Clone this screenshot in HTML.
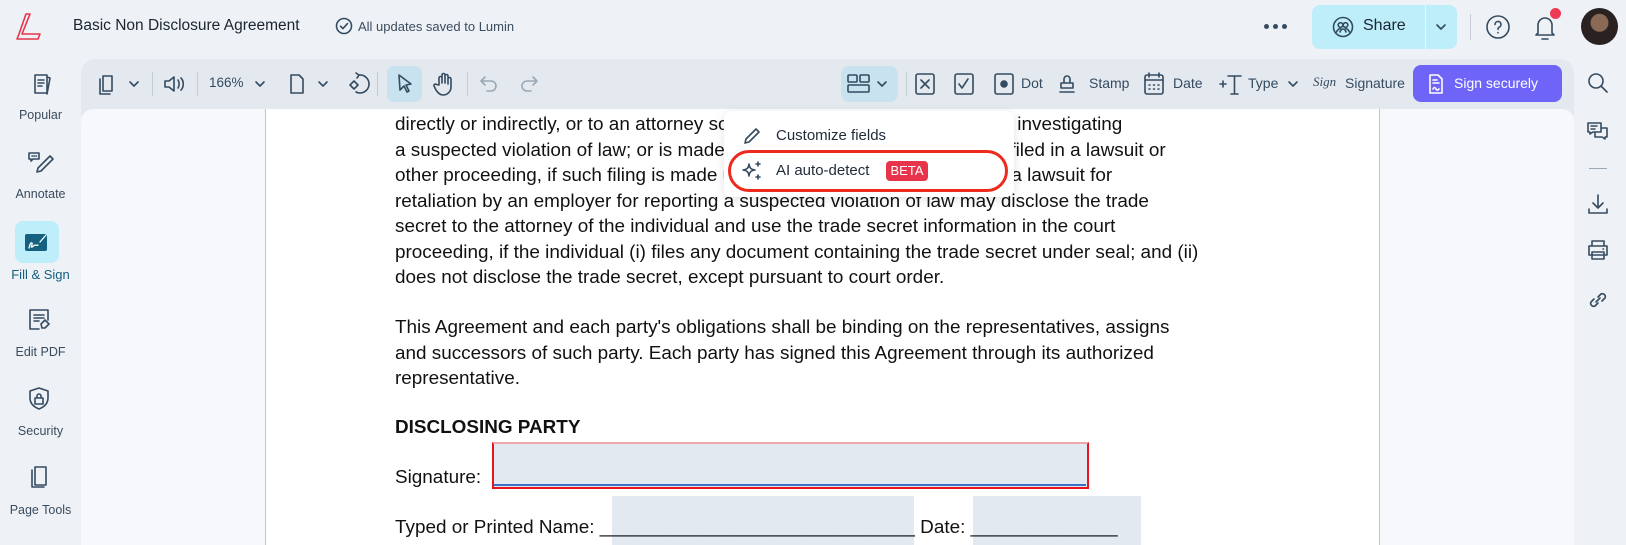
<!DOCTYPE html>
<html><head><meta charset="utf-8"><style>
*{margin:0;padding:0;box-sizing:border-box}
body{width:1626px;height:545px;overflow:hidden;background:#eef1f6;font-family:"Liberation Sans",sans-serif;position:relative;color:#1e2b38}
.a{position:absolute}
svg{position:absolute;fill:none;stroke:#344b60;stroke-width:1.6;stroke-linecap:round;stroke-linejoin:round}
.lbl{position:absolute;width:81px;text-align:center;font-size:12.5px;color:#3a4c5e}
.tb{position:absolute;top:70px;font-size:14px;color:#344b60}
.sep{position:absolute;top:72px;width:1px;height:24px;background:#c4ccd6}
.ln{position:absolute;left:395px;font-size:18.9px;white-space:nowrap;color:#111;font-family:"Liberation Sans",Arial,sans-serif}
</style></head><body>
<!-- header -->
<svg style="left:14px;top:12px" width="30" height="30" viewBox="0 0 30 30"><path d="M12 2 L16 2 L8 22 L26 22 L24 27 L3 27 L5 22 Z" stroke="#e8344a" stroke-width="1.6"/></svg>
<div class="a" style="left:73px;top:17px;font-size:15.5px;color:#1a2530">Basic Non Disclosure Agreement</div>
<svg style="left:335px;top:17px" width="18" height="18" viewBox="0 0 18 18"><circle cx="9" cy="9" r="7.5"/><path d="M5.5 9.2l2.4 2.4 4.6-5"/></svg>
<div class="a" style="left:358px;top:19px;font-size:13px;color:#3a4c5e">All updates saved to Lumin</div>
<div class="a" style="left:1264px;top:24px;width:5px;height:5px;border-radius:50%;background:#344b60;box-shadow:9px 0 0 #344b60,18px 0 0 #344b60"></div>
<div class="a" style="left:1312px;top:5px;width:145px;height:44px;background:#bdeefa;border-radius:8px"></div>
<div class="a" style="left:1425px;top:5px;width:1px;height:44px;background:#e6f8fd"></div>
<svg style="left:1332px;top:16px" width="22" height="22" viewBox="0 0 22 22"><circle cx="11" cy="11" r="9.5"/><circle cx="8.5" cy="9" r="2.3"/><circle cx="13.5" cy="9" r="2.3"/><path d="M4.5 16c1-2.5 3-3.5 4-3.5M17.5 16c-1-2.5-3-3.5-4-3.5M8 16c.5-2 2-3 3-3s2.5 1 3 3"/></svg>
<div class="a" style="left:1363px;top:17px;font-size:16px;color:#1a2530">Share</div>
<svg style="left:1434px;top:20px" width="14" height="14" viewBox="0 0 14 14"><path d="M3 5l4 4 4-4"/></svg>
<div class="a" style="left:1470px;top:14px;width:1px;height:26px;background:#c4ccd6"></div>
<svg style="left:1485px;top:14px" width="26" height="26" viewBox="0 0 26 26"><circle cx="13" cy="13" r="11"/><path d="M10 10.5a3 3 0 1 1 4 2.8c-.8.4-1 1-1 2M13 18.5v.3"/></svg>
<svg style="left:1532px;top:12px" width="26" height="30" viewBox="0 0 26 30"><path d="M6 21V13a7 7 0 0 1 14 0v8l2 2H4zM10 27h6"/></svg>
<div class="a" style="left:1550px;top:8px;width:11px;height:11px;border-radius:50%;background:#ef3a55"></div>
<div class="a" style="left:1581px;top:8px;width:37px;height:37px;border-radius:50%;background:radial-gradient(circle at 50% 40%,#8a6a55 0 30%,#2a2220 32% 100%)"></div>
<!-- toolbar -->
<div class="a" style="left:81px;top:59px;width:1493px;height:486px;background:#e4e9f0;border-radius:14px 14px 0 0"></div>
<svg style="left:96px;top:72px" width="22" height="24" viewBox="0 0 22 24"><path d="M7 4h9v15H7zM4 7v15h10"/></svg>
<svg style="left:128px;top:78px" width="12" height="12" viewBox="0 0 12 12"><path d="M2 4l4 4 4-4"/></svg>
<div class="sep" style="left:152px"></div>
<svg style="left:162px;top:73px" width="24" height="22" viewBox="0 0 24 22"><path d="M3 8h4l5-4v14l-5-4H3zM16 7c1.5 2 1.5 6 0 8M19 5c3 3 3 9 0 12"/></svg>
<div class="sep" style="left:197px"></div>
<div class="tb" style="left:209px;top:75px;font-size:13.5px">166%</div>
<svg style="left:254px;top:78px" width="12" height="12" viewBox="0 0 12 12"><path d="M2 4l4 4 4-4"/></svg>
<svg style="left:288px;top:72px" width="18" height="24" viewBox="0 0 18 24"><path d="M3 3h8l4 4v14H3z"/></svg>
<svg style="left:317px;top:78px" width="12" height="12" viewBox="0 0 12 12"><path d="M2 4l4 4 4-4"/></svg>
<svg style="left:347px;top:71px" width="24" height="26" viewBox="0 0 24 26"><path d="M12 4a9 9 0 1 1-3 17M12 4l-3-2M12 4l-2 3M3 14l4-4 4 4-4 4z"/></svg>
<div class="sep" style="left:377px"></div>
<div class="a" style="left:387px;top:66px;width:35px;height:36px;background:#c9e2f0;border-radius:7px"></div>
<svg style="left:395px;top:73px" width="20" height="22" viewBox="0 0 20 22"><path d="M4 2l12 9-5 1 3 6-2 1-3-6-4 4z"/></svg>
<svg style="left:432px;top:71px" width="24" height="26" viewBox="0 0 24 26"><path d="M7 14V7a1.5 1.5 0 0 1 3 0v5V4a1.5 1.5 0 0 1 3 0v8V5a1.5 1.5 0 0 1 3 0v8V8a1.5 1.5 0 0 1 3 0v8a8 8 0 0 1-8 8c-3 0-5-2-7-5l-2-4a1.5 1.5 0 0 1 2.5-1.5z"/></svg>
<div class="sep" style="left:467px"></div>
<svg style="left:478px;top:73px" width="22" height="22" viewBox="0 0 22 22"><path d="M7 4L3 8l4 4M3 8h10a5 5 0 0 1 0 10h-4" stroke="#9aa8b6"/></svg>
<svg style="left:518px;top:73px" width="22" height="22" viewBox="0 0 22 22"><path d="M15 4l4 4-4 4M19 8H9a5 5 0 0 0 0 10h4" stroke="#9aa8b6"/></svg>
<!-- right toolbar -->
<div class="a" style="left:841px;top:66px;width:57px;height:36px;background:#c9e2f0;border-radius:8px"></div>
<svg style="left:846px;top:72px" width="26" height="24" viewBox="0 0 26 24"><rect x="2" y="3" width="9" height="7" rx="1"/><rect x="14" y="3" width="9" height="7" rx="1"/><rect x="2" y="13" width="21" height="7" rx="1"/></svg>
<svg style="left:876px;top:78px" width="12" height="12" viewBox="0 0 12 12"><path d="M2 4l4 4 4-4"/></svg>
<div class="sep" style="left:906px"></div>
<svg style="left:914px;top:72px" width="22" height="24" viewBox="0 0 22 24"><rect x="2" y="2" width="18" height="20" rx="2"/><path d="M7 8l8 8M15 8l-8 8"/></svg>
<svg style="left:953px;top:72px" width="22" height="24" viewBox="0 0 22 24"><rect x="2" y="2" width="18" height="20" rx="2"/><path d="M6 12l3 4 6-9"/></svg>
<svg style="left:993px;top:72px" width="22" height="24" viewBox="0 0 22 24"><rect x="2" y="2" width="18" height="20" rx="2"/><circle cx="11" cy="12" r="3" fill="#344b60"/></svg>
<div class="tb" style="left:1021px;top:75px">Dot</div>
<svg style="left:1056px;top:71px" width="22" height="26" viewBox="0 0 22 26"><path d="M8 12V8a3 3 0 1 1 6 0v4M5 12h12v5H5zM4 21h14"/></svg>
<div class="tb" style="left:1089px;top:75px">Stamp</div>
<svg style="left:1143px;top:71px" width="22" height="26" viewBox="0 0 22 26"><rect x="2" y="4" width="18" height="19" rx="2"/><path d="M2 9h18M6 2v4M16 2v4M6 14h1M10.5 14h1M15 14h1M6 18h1M10.5 18h1M15 18h1"/></svg>
<div class="tb" style="left:1173px;top:75px">Date</div>
<svg style="left:1218px;top:71px" width="26" height="26" viewBox="0 0 26 26"><path d="M10 5h13M16.5 5v18M13 23h7M2 13h6M5 10v6"/></svg>
<div class="tb" style="left:1248px;top:75px">Type</div>
<svg style="left:1287px;top:78px" width="12" height="12" viewBox="0 0 12 12"><path d="M2 4l4 4 4-4"/></svg>
<div class="a" style="left:1313px;top:74px;font-size:13px;font-style:italic;font-family:'Liberation Serif',serif;color:#344b60">Sign</div>
<div class="tb" style="left:1345px;top:75px">Signature</div>
<div class="a" style="left:1413px;top:65px;width:149px;height:37px;background:#6e64f8;border-radius:8px"></div>
<svg style="left:1427px;top:73px" width="18" height="22" viewBox="0 0 18 22"><path d="M3 2h8l4 4v14H3zM6 7h4M6 10h6M6 16c1-2 2-2 3 0s2 1 3 0" stroke="#fff"/></svg>
<div class="a" style="left:1454px;top:75px;font-size:14px;color:#fff">Sign securely</div>
<!-- doc area -->
<div class="a" style="left:81px;top:109px;width:1493px;height:436px;background:#f6f8fc;border-radius:12px 12px 0 0"></div>
<div class="a" style="left:265px;top:109px;width:1115px;height:436px;background:#fff;border-left:1px solid #b4c8da;border-right:1px solid #b4c8da"></div>
<!-- text -->
<div class="ln" style="top:114px">directly or indirectly, or to an attorney solely for the purpose of reporting or investigating</div>
<div class="ln" style="top:140px">a suspected violation of law; or is made in a complaint or other document filed in a lawsuit or</div>
<div class="ln" style="top:165px">other proceeding, if such filing is made under seal. An individual who files a lawsuit for</div>
<div class="ln" style="top:191px">retaliation by an employer for reporting a suspected violation of law may disclose the trade</div>
<div class="ln" style="top:216px">secret to the attorney of the individual and use the trade secret information in the court</div>
<div class="ln" style="top:242px">proceeding, if the individual (i) files any document containing the trade secret under seal; and (ii)</div>
<div class="ln" style="top:267px">does not disclose the trade secret, except pursuant to court order.</div>
<div class="ln" style="top:317px">This Agreement and each party's obligations shall be binding on the representatives, assigns</div>
<div class="ln" style="top:343px">and successors of such party. Each party has signed this Agreement through its authorized</div>
<div class="ln" style="top:368px">representative.</div>
<div class="ln" style="top:417px;font-weight:bold">DISCLOSING PARTY</div>
<div class="a" style="left:492px;top:442px;width:597px;height:47px;background:#e2e9f1;border:2px solid #e8141e;border-top-color:#f0a8b0"></div>
<div class="a" style="left:494px;top:484px;width:592px;height:2px;background:#3a6fc8"></div>
<div class="ln" style="top:467px">Signature:</div>
<div class="a" style="left:612px;top:496px;width:302px;height:49px;background:#e2e9f1"></div>
<div class="a" style="left:973px;top:496px;width:168px;height:49px;background:#e2e9f1"></div>
<div class="ln" style="top:517px">Typed or Printed Name: ______________________________ Date: ______________</div>
<!-- dropdown -->
<div class="a" style="left:724px;top:111px;width:290px;height:86px;background:#fff;border-radius:8px;box-shadow:0 2px 10px rgba(0,0,0,.12)"></div>
<svg style="left:741px;top:125px" width="22" height="22" viewBox="0 0 22 22"><path d="M4 18l1-4L15 4l3 3L8 17z"/></svg>
<div class="a" style="left:776px;top:127px;font-size:15px;color:#1e2b38">Customize fields</div>
<div class="a" style="left:728px;top:150px;width:280px;height:42px;border:3px solid #ee2a1e;border-radius:21px"></div>
<svg style="left:741px;top:160px" width="22" height="22" viewBox="0 0 22 22"><path d="M8 4c.5 4 2 5.5 6 6-4 .5-5.5 2-6 6-.5-4-2-5.5-6-6 4-.5 5.5-2 6-6zM17 2v4M15 4h4M17 15v4M15 17h4"/></svg>
<div class="a" style="left:776px;top:162px;font-size:15px;color:#1e2b38">AI auto-detect</div>
<div class="a" style="left:886px;top:161px;width:42px;height:20px;background:#e8344a;border-radius:4px;color:#fff;font-size:13px;text-align:center;line-height:20px">BETA</div>
<!-- left sidebar -->
<svg style="left:28px;top:70px" width="26" height="28" viewBox="0 0 26 28"><path d="M7 5h12v18H7zM10 10h6M10 13h6M10 16h4M19 7l3 1-3 16"/></svg>
<div class="lbl" style="left:0;top:108px">Popular</div>
<svg style="left:26px;top:150px" width="30" height="28" viewBox="0 0 30 28"><path d="M3 3h10v6H7l-2 2V9H3zM6 6h.5M8 6h.5M10 6h.5M24 6l3 3-12 12-4 1 1-4z"/></svg>
<div class="lbl" style="left:0;top:187px">Annotate</div>
<div class="a" style="left:15px;top:221px;width:44px;height:42px;background:#bdeefa;border-radius:8px"></div>
<div class="a" style="left:25px;top:234px;width:22px;height:17px;background:#14607e;border-radius:2px"></div>
<svg style="left:24px;top:228px" width="26" height="24" viewBox="0 0 26 24"><path d="M5 20c1-4 2-6 3-5s-2 5 0 4 2-2 3-2 1 1 3 0M16 14l6-7" stroke="#fff" stroke-width="1.3"/></svg>
<div class="lbl" style="left:0;top:267px;color:#14607e;font-size:13px">Fill &amp; Sign</div>
<svg style="left:26px;top:306px" width="26" height="28" viewBox="0 0 26 28"><path d="M13 23H4V4h18v10M8 9h10M8 12h10M8 15h5M15 18l4-4 4 4-4 4-3 0z"/></svg>
<div class="lbl" style="left:0;top:345px">Edit PDF</div>
<svg style="left:26px;top:385px" width="26" height="28" viewBox="0 0 26 28"><path d="M13 3l9 3v7c0 6-4 9-9 11-5-2-9-5-9-11V6zM9 13h8v6H9zM11 13v-2a2 2 0 0 1 4 0v2"/></svg>
<div class="lbl" style="left:0;top:424px">Security</div>
<svg style="left:26px;top:463px" width="26" height="28" viewBox="0 0 26 28"><path d="M9 4h11v18H9zM6 7v17h12"/></svg>
<div class="lbl" style="left:0;top:503px">Page Tools</div>
<!-- right sidebar -->
<svg style="left:1586px;top:71px" width="24" height="24" viewBox="0 0 24 24"><circle cx="10" cy="10" r="7"/><path d="M15 15l6 6"/></svg>
<svg style="left:1586px;top:120px" width="24" height="24" viewBox="0 0 24 24"><path d="M2 3h13v9H7l-3 2v-2H2zM15 8h6v9h-2v2l-3-2H9v-5M5 6h6M5 9h4"/></svg>
<div class="a" style="left:1589px;top:168px;width:18px;height:1px;background:#9ab"></div>
<svg style="left:1586px;top:192px" width="24" height="24" viewBox="0 0 24 24"><path d="M12 3v13M7 11l5 5 5-5M3 17v4h18v-4"/></svg>
<svg style="left:1586px;top:238px" width="24" height="24" viewBox="0 0 24 24"><path d="M6 8V3h12v5M3 8h18v9H3zM6 14h12v7H6zM17 11h.5"/></svg>
<svg style="left:1586px;top:288px" width="24" height="24" viewBox="0 0 24 24"><path d="M10 14l4-4M8 11l-3 3a3 3 0 0 0 4 4l3-3M16 13l3-3a3 3 0 0 0-4-4l-3 3"/></svg>
</body></html>
